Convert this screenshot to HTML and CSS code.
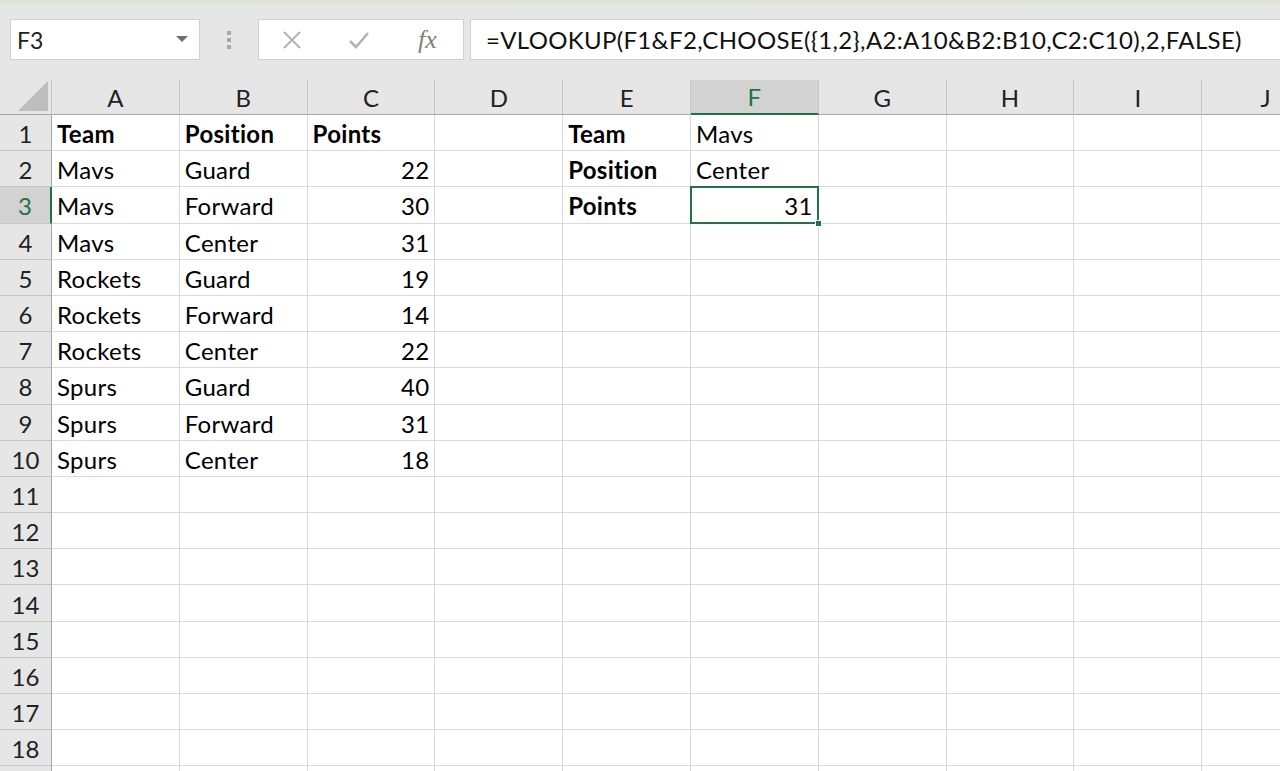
FILE: index.html
```html
<!DOCTYPE html>
<html>
<head>
<meta charset="utf-8">
<link rel="stylesheet" href="styles.css">
</head>
<body>
<div class="app">
  <div class="topstrip"></div>
  <div class="fbar">
    <div class="namebox"><span class="nb-text">F3</span><svg class="nb-arrow" width="12" height="7" viewBox="0 0 12 7"><path d="M0 0 L12 0 L6 6 Z" fill="#6e6e6e"/></svg></div>
    <div class="grip"><span></span><span></span><span></span></div>
    <div class="btnbox">
      <svg class="ico" width="20" height="20" viewBox="0 0 20 20"><path d="M2 2 L18 18 M18 2 L2 18" stroke="#b4b4b4" stroke-width="2" fill="none"/></svg>
      <svg class="ico" width="22" height="20" viewBox="0 0 22 20"><path d="M2 11 L8 17 L20 3" stroke="#b4b4b4" stroke-width="2.6" fill="none"/></svg>
      <span class="fx">fx</span>
    </div>
    <div class="formula">=VLOOKUP(F1&amp;F2,CHOOSE({1,2},A2:A10&amp;B2:B10,C2:C10),2,FALSE)</div>
  </div>
  <div class="sheet">
    <div class="corner"><svg width="30" height="30" viewBox="0 0 30 30"><path d="M30 0 L30 30 L0 30 Z" fill="#bdbdbd"/></svg></div>
    <div class="ch">A</div><div class="ch">B</div><div class="ch">C</div><div class="ch">D</div><div class="ch">E</div><div class="ch sel">F</div><div class="ch">G</div><div class="ch">H</div><div class="ch">I</div><div class="ch">J</div>

    <div class="rh">1</div><div class="c b">Team</div><div class="c b">Position</div><div class="c b">Points</div><div class="c"></div><div class="c b">Team</div><div class="c">Mavs</div><div class="c"></div><div class="c"></div><div class="c"></div><div class="c"></div>
    <div class="rh">2</div><div class="c">Mavs</div><div class="c">Guard</div><div class="c n">22</div><div class="c"></div><div class="c b">Position</div><div class="c">Center</div><div class="c"></div><div class="c"></div><div class="c"></div><div class="c"></div>
    <div class="rh sel">3</div><div class="c">Mavs</div><div class="c">Forward</div><div class="c n">30</div><div class="c"></div><div class="c b">Points</div><div class="c n active">31<span class="handle"></span></div><div class="c"></div><div class="c"></div><div class="c"></div><div class="c"></div>
    <div class="rh">4</div><div class="c">Mavs</div><div class="c">Center</div><div class="c n">31</div><div class="c"></div><div class="c"></div><div class="c"></div><div class="c"></div><div class="c"></div><div class="c"></div><div class="c"></div>
    <div class="rh">5</div><div class="c">Rockets</div><div class="c">Guard</div><div class="c n">19</div><div class="c"></div><div class="c"></div><div class="c"></div><div class="c"></div><div class="c"></div><div class="c"></div><div class="c"></div>
    <div class="rh">6</div><div class="c">Rockets</div><div class="c">Forward</div><div class="c n">14</div><div class="c"></div><div class="c"></div><div class="c"></div><div class="c"></div><div class="c"></div><div class="c"></div><div class="c"></div>
    <div class="rh">7</div><div class="c">Rockets</div><div class="c">Center</div><div class="c n">22</div><div class="c"></div><div class="c"></div><div class="c"></div><div class="c"></div><div class="c"></div><div class="c"></div><div class="c"></div>
    <div class="rh">8</div><div class="c">Spurs</div><div class="c">Guard</div><div class="c n">40</div><div class="c"></div><div class="c"></div><div class="c"></div><div class="c"></div><div class="c"></div><div class="c"></div><div class="c"></div>
    <div class="rh">9</div><div class="c">Spurs</div><div class="c">Forward</div><div class="c n">31</div><div class="c"></div><div class="c"></div><div class="c"></div><div class="c"></div><div class="c"></div><div class="c"></div><div class="c"></div>
    <div class="rh">10</div><div class="c">Spurs</div><div class="c">Center</div><div class="c n">18</div><div class="c"></div><div class="c"></div><div class="c"></div><div class="c"></div><div class="c"></div><div class="c"></div><div class="c"></div>
    <div class="rh">11</div><div class="c"></div><div class="c"></div><div class="c"></div><div class="c"></div><div class="c"></div><div class="c"></div><div class="c"></div><div class="c"></div><div class="c"></div><div class="c"></div>
    <div class="rh">12</div><div class="c"></div><div class="c"></div><div class="c"></div><div class="c"></div><div class="c"></div><div class="c"></div><div class="c"></div><div class="c"></div><div class="c"></div><div class="c"></div>
    <div class="rh">13</div><div class="c"></div><div class="c"></div><div class="c"></div><div class="c"></div><div class="c"></div><div class="c"></div><div class="c"></div><div class="c"></div><div class="c"></div><div class="c"></div>
    <div class="rh">14</div><div class="c"></div><div class="c"></div><div class="c"></div><div class="c"></div><div class="c"></div><div class="c"></div><div class="c"></div><div class="c"></div><div class="c"></div><div class="c"></div>
    <div class="rh">15</div><div class="c"></div><div class="c"></div><div class="c"></div><div class="c"></div><div class="c"></div><div class="c"></div><div class="c"></div><div class="c"></div><div class="c"></div><div class="c"></div>
    <div class="rh">16</div><div class="c"></div><div class="c"></div><div class="c"></div><div class="c"></div><div class="c"></div><div class="c"></div><div class="c"></div><div class="c"></div><div class="c"></div><div class="c"></div>
    <div class="rh">17</div><div class="c"></div><div class="c"></div><div class="c"></div><div class="c"></div><div class="c"></div><div class="c"></div><div class="c"></div><div class="c"></div><div class="c"></div><div class="c"></div>
    <div class="rh">18</div><div class="c"></div><div class="c"></div><div class="c"></div><div class="c"></div><div class="c"></div><div class="c"></div><div class="c"></div><div class="c"></div><div class="c"></div><div class="c"></div>
    <div class="rh"></div><div class="c"></div><div class="c"></div><div class="c"></div><div class="c"></div><div class="c"></div><div class="c"></div><div class="c"></div><div class="c"></div><div class="c"></div><div class="c"></div>
  </div>
</div>
</body>
</html>
```
FILE: styles.css
```css
* { box-sizing: border-box; }
html, body { margin: 0; padding: 0; }
body {
  width: 1280px;
  height: 771px;
  overflow: hidden;
  background: #e6e6e6;
  font-family: Lato, "Open Sans", sans-serif;
  color: #000;
}
.app { width: 1280px; height: 771px; overflow: hidden; }
.topstrip {
  height: 6px;
  background: linear-gradient(#dde1d7, #e3e5df);
}
.fbar {
  display: flex;
  align-items: stretch;
  height: 41px;
  margin-top: 13px;
  padding-left: 10px;
}
.namebox {
  width: 190px;
  background: #fff;
  border: 1px solid #d0d0d0;
  display: flex;
  align-items: center;
  justify-content: space-between;
  padding: 0 11px 0 6px;
}
.nb-text { font-size: 23px; color: #222; }
.grip {
  width: 58px;
  display: flex;
  flex-direction: column;
  align-items: center;
  justify-content: center;
  gap: 3px;
}
.grip span { width: 4px; height: 4px; background: #a8a8a8; }
.btnbox {
  width: 206px;
  background: #fff;
  border: 1px solid #d0d0d0;
  display: flex;
  align-items: center;
  padding-left: 23px;
  gap: 46px;
}
.fx {
  font-family: "Liberation Serif", serif;
  font-style: italic;
  font-size: 26px;
  color: #808080;
  margin-left: 2px;
}
.formula {
  flex: 1;
  margin-left: 6px;
  background: #fff;
  border: 1px solid #d0d0d0;
  border-right: none;
  font-size: 24px;
  letter-spacing: 0.33px;
  padding-left: 15px;
  display: flex;
  align-items: center;
  white-space: nowrap;
  color: #111;
}
.sheet {
  margin-top: 20px;
  display: grid;
  grid-template-columns: 52px repeat(10, 127.8px);
  grid-template-rows: 35px repeat(19, 36.2px);
  background: #fff;
}
.corner {
  background: #e6e6e6;
  border-right: 1px solid #c6c6c6;
  border-bottom: 1px solid #a6a6a6;
  display: flex;
  align-items: flex-end;
  justify-content: flex-end;
  padding: 0 3px 3px 0;
}
.ch {
  background: #e6e6e6;
  border-right: 1px solid #c6c6c6;
  border-bottom: 1px solid #a6a6a6;
  font-size: 24px;
  color: #222;
  display: flex;
  align-items: center;
  justify-content: center;
}
.ch.sel {
  background: #d2d2d2;
  color: #217346;
  border-bottom: 2px solid #217346;
}
.rh {
  background: #e6e6e6;
  border-right: 1px solid #a6a6a6;
  border-bottom: 1px solid #c6c6c6;
  font-size: 24px;
  color: #222;
  display: flex;
  align-items: center;
  justify-content: center;
  padding-top: 2px;
}
.rh.sel {
  background: #d2d2d2;
  color: #217346;
  border-right: 2px solid #217346;
}
.c {
  border-right: 1px solid #dadada;
  border-bottom: 1px solid #dadada;
  font-size: 24px;
  letter-spacing: 0.3px;
  padding: 2px 5px 0 5px;
  display: flex;
  align-items: center;
  white-space: nowrap;
}
.c.b { font-weight: bold; }
.c.n { justify-content: flex-end; }
.c.active { position: relative; }
.c.active::after {
  content: "";
  position: absolute;
  left: -1px; top: -1px; right: -1px; bottom: -1px;
  border: 2px solid #217346;
}
.handle {
  position: absolute;
  right: -4px; bottom: -4px;
  width: 7px; height: 7px;
  background: #217346;
  border: 1px solid #fff;
  z-index: 2;
}
```
